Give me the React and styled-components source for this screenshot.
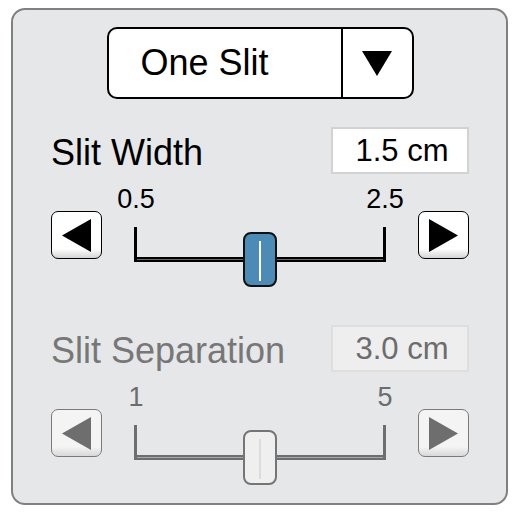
import React from "react";
import styled, { createGlobalStyle } from "styled-components";

const GlobalStyle = createGlobalStyle`
  body {
    margin: 0;
    background: #ffffff;
    font-family: "Liberation Sans", Arial, sans-serif;
  }
`;

const RAIL_WIDTH = 252;

const Panel = styled.div`
  box-sizing: border-box;
  width: 497px;
  height: 497px;
  margin: 8px 0 0 11px;
  padding: 17px 37px 0 38px;
  border: 2px solid #808080;
  border-radius: 14px;
  background: #e6e7e8;
  display: flex;
  flex-direction: column;
`;

const Combo = styled.div`
  box-sizing: border-box;
  align-self: center;
  width: 307px;
  height: 72px;
  border: 2px solid #000;
  border-radius: 10px;
  background: #fff;
  display: flex;
`;

const ComboLabel = styled.div`
  flex: 1;
  display: flex;
  align-items: center;
  padding-left: 32px;
  font-size: 36px;
  color: #000;
  border-right: 2px solid #000;
`;

const ComboArrow = styled.div`
  width: 69px;
  display: flex;
  align-items: center;
  justify-content: center;
`;

const Section = styled.div`
  display: flex;
  flex-direction: column;
  margin-top: ${(p) => p.$top}px;
`;

const Header = styled.div`
  display: flex;
  align-items: center;
  justify-content: space-between;
  height: 47px;
`;

const Label = styled.div`
  font-size: 36px;
  color: ${(p) => (p.$disabled ? "#777" : "#000")};
  padding-top: 5px;
`;

const ValueBox = styled.div`
  box-sizing: border-box;
  width: 138px;
  height: 47px;
  border: 2px solid ${(p) => (p.$disabled ? "#dedede" : "#d2d2d2")};
  background: ${(p) => (p.$disabled ? "#eeeeee" : "#ffffff")};
  color: ${(p) => (p.$disabled ? "#6c6c6c" : "#000")};
  font-size: 31px;
  display: flex;
  align-items: center;
  justify-content: center;
  padding-left: 4px;
`;

const SliderRow = styled.div`
  display: flex;
  align-items: flex-start;
  margin-top: 12px;
`;

const StepButton = styled.button`
  box-sizing: border-box;
  width: 51px;
  height: 48px;
  margin-top: 25px;
  padding: 0;
  border: 1.5px solid ${(p) => (p.$disabled ? "#7a7a7a" : "#000")};
  border-radius: 7px;
  background: ${(p) =>
    p.$disabled
      ? "linear-gradient(#f4f4f4 80%, #d8d8d8)"
      : "linear-gradient(#ffffff 80%, #d4d4d4)"};
  display: flex;
  align-items: center;
  justify-content: center;
`;

const TrackArea = styled.div`
  position: relative;
  flex: 1;
  height: 101px;
`;

const TickLabels = styled.div`
  display: flex;
  justify-content: space-between;
  padding: 0 33px 0 34px;
  height: 27px;
`;

const TickLabel = styled.div`
  width: 0;
  display: flex;
  justify-content: center;
  font-size: 27px;
  line-height: 27px;
  white-space: nowrap;
  color: ${(p) => (p.$disabled ? "#6c6c6c" : "#000")};
`;

const Rail = styled.div`
  box-sizing: border-box;
  width: ${RAIL_WIDTH}px;
  height: 35px;
  margin: 14px 0 0 32px;
  border-left: 3px solid ${(p) => (p.$disabled ? "#6e6e6e" : "#000")};
  border-right: 3px solid ${(p) => (p.$disabled ? "#6e6e6e" : "#000")};
  display: flex;
  align-items: flex-end;
`;

const RailLine = styled.div`
  flex: 1;
  height: 1px;
  border-top: 2px solid ${(p) => (p.$disabled ? "#6e6e6e" : "#000")};
  border-bottom: 2px solid ${(p) => (p.$disabled ? "#6e6e6e" : "#000")};
  background: ${(p) => (p.$disabled ? "#a8a8a8" : "#6a6a6a")};
`;

const Thumb = styled.div`
  position: absolute;
  top: 46px;
  box-sizing: border-box;
  width: 34px;
  height: 55px;
  border: 2px solid ${(p) => (p.$disabled ? "#757575" : "#111")};
  border-radius: 8px;
  background: ${(p) => (p.$disabled ? "#efefef" : "#4b8bb5")};
  display: flex;
  justify-content: center;
  padding-top: 7px;

  &::after {
    content: "";
    width: 2px;
    height: 40px;
    background: ${(p) => (p.$disabled ? "#dcdcdc" : "#ffffff")};
  }
`;

const Triangle = ({ dir, color }) => {
  const points = {
    down: "0,0 30,0 15,25",
    left: "29,0 29,33 0,16.5",
    right: "0,0 0,33 29,16.5",
  }[dir];
  const w = dir === "down" ? 30 : 29;
  const h = dir === "down" ? 25 : 33;
  return (
    <svg width={w} height={h} viewBox={`0 0 ${w} ${h}`}>
      <polygon points={points} fill={color} />
    </svg>
  );
};

const Slider = ({ label, unit, value, min, max, disabled, top }) => {
  const frac = (value - min) / (max - min);
  const arrow = disabled ? "#6e6e6e" : "#000";
  return (
    <Section $top={top}>
      <Header>
        <Label $disabled={disabled}>{label}</Label>
        <ValueBox $disabled={disabled}>
          {value.toFixed(1)} {unit}
        </ValueBox>
      </Header>
      <SliderRow>
        <StepButton $disabled={disabled}>
          <Triangle dir="left" color={arrow} />
        </StepButton>
        <TrackArea>
          <TickLabels>
            <TickLabel $disabled={disabled}>{String(min)}</TickLabel>
            <TickLabel $disabled={disabled}>{String(max)}</TickLabel>
          </TickLabels>
          <Rail $disabled={disabled}>
            <RailLine $disabled={disabled} />
          </Rail>
          <Thumb
            $disabled={disabled}
            style={{ left: 32 + frac * RAIL_WIDTH - 17 }}
          />
        </TrackArea>
        <StepButton $disabled={disabled}>
          <Triangle dir="right" color={arrow} />
        </StepButton>
      </SliderRow>
    </Section>
  );
};

export default function App() {
  return (
    <>
      <GlobalStyle />
      <Panel>
        <Combo>
          <ComboLabel>One Slit</ComboLabel>
          <ComboArrow>
            <Triangle dir="down" color="#000" />
          </ComboArrow>
        </Combo>
        <Slider label="Slit Width" unit="cm" value={1.5} min="0.5" max="2.5" top={28} />
        <Slider
          label="Slit Separation"
          unit="cm"
          value={3.0}
          min="1"
          max="5"
          disabled
          top={38}
        />
      </Panel>
    </>
  );
}
